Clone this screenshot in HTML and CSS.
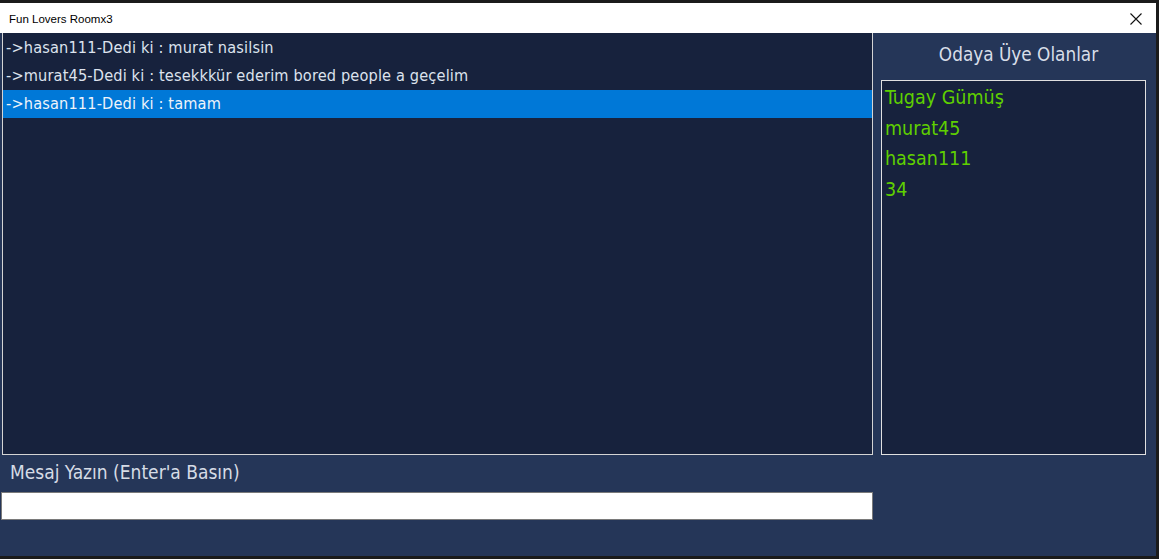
FILE: index.html
```html
<!DOCTYPE html>
<html lang="tr">
<head>
<meta charset="utf-8">
<title>Fun Lovers Roomx3</title>
<link rel="stylesheet" href="styles.css">
</head>
<body>
<div class="desk">
  <div class="window">
    <div class="titlebar">
      <span class="title">Fun Lovers Roomx3</span>
      <svg class="close" width="12" height="12" viewBox="0 0 12 12"><path d="M0.5 0.5 L11.5 11.5 M11.5 0.5 L0.5 11.5" stroke="#111" stroke-width="1.1" fill="none"/></svg>
    </div>
    <div class="client">
      <div class="left">
        <ul class="chat">
          <li class="msg">-&gt;hasan111-Dedi ki : murat nasilsin</li>
          <li class="msg">-&gt;murat45-Dedi ki : tesekkkür ederim bored people a geçelim</li>
          <li class="msg selected">-&gt;hasan111-Dedi ki : tamam</li>
        </ul>
        <div class="prompt">Mesaj Yazın (Enter'a Basın)</div>
        <input class="entry" type="text">
      </div>
      <div class="right">
        <div class="heading">Odaya Üye Olanlar</div>
        <ul class="members">
          <li>Tugay Gümüş</li>
          <li>murat45</li>
          <li>hasan111</li>
          <li>34</li>
        </ul>
      </div>
    </div>
  </div>
</div>
</body>
</html>
```

FILE: styles.css
```css
html, body {
  margin: 0;
  padding: 0;
  background: #1b1b1b;
}
.desk {
  width: 1159px;
  height: 559px;
  padding-top: 3px;
  box-sizing: border-box;
}
.window {
  width: 1156px;
  height: 553px;
  display: flex;
  flex-direction: column;
}
.titlebar {
  height: 30px;
  background: #ffffff;
  display: flex;
  align-items: center;
  justify-content: space-between;
  padding: 0 14px 0 9px;
  font-family: "Liberation Sans", Arial, sans-serif;
  font-size: 11.5px;
  color: #000;
}
.title {
  padding-top: 1px;
}
.close {
  display: block;
  margin-top: 1px;
}
.client {
  flex: 1;
  background: #253658;
  display: flex;
  font-family: "DejaVu Sans Condensed", "DejaVu Sans", sans-serif;
}
.left {
  width: 873px;
  display: flex;
  flex-direction: column;
}
.chat {
  list-style: none;
  margin: 0 0 0 2px;
  padding: 1px 0 0 0;
  height: 422px;
  box-sizing: border-box;
  border: 1px solid #d4d4d4;
  border-top: none;
  background: #17223d;
}
.msg {
  height: 28px;
  line-height: 28px;
  padding-left: 3px;
  font-size: 16.2px;
  letter-spacing: 0.15px;
  color: #dde3ee;
  white-space: nowrap;
}
.selected {
  background: #0078d7;
  color: #eef3fa;
}
.prompt {
  height: 37px;
  line-height: 35px;
  padding-left: 10px;
  font-size: 19px;
  color: #d6dce6;
}
.entry {
  display: block;
  margin: 0 0 0 1px;
  width: 872px;
  height: 28px;
  box-sizing: border-box;
  border: 1px solid #7a7a7a;
  background: #fff;
  outline: none;
  padding: 0;
}
.right {
  flex: 1;
  display: flex;
  flex-direction: column;
  padding: 0 10px 0 8px;
}
.heading {
  height: 47px;
  line-height: 43px;
  text-align: center;
  font-size: 18.8px;
  color: #d8dee8;
  padding-left: 10px;
}
.members {
  list-style: none;
  margin: 0;
  padding: 2px 0 0 3px;
  height: 375px;
  box-sizing: border-box;
  border: 1px solid #e0e0e0;
  background: #17223d;
}
.members li {
  height: 30.6px;
  line-height: 30.6px;
  font-size: 19.5px;
  color: #5fd000;
  white-space: nowrap;
}
```
